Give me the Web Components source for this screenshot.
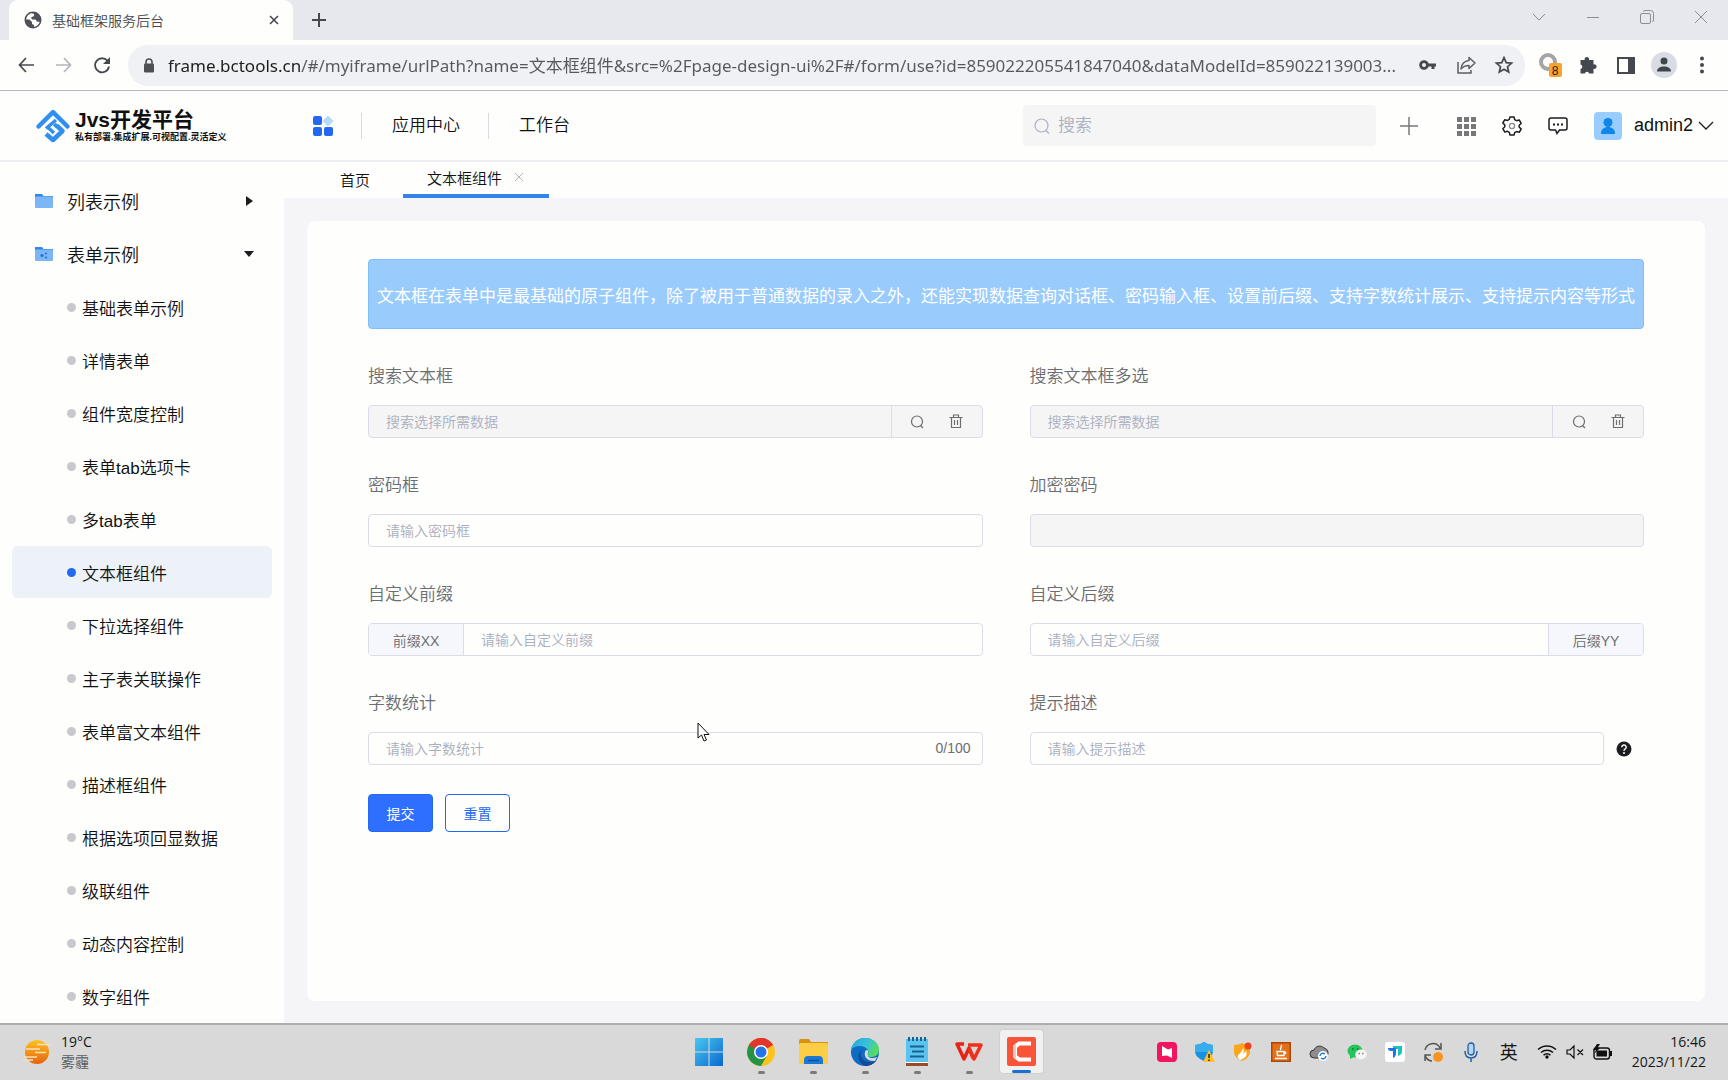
<!DOCTYPE html>
<html lang="zh-CN">
<head>
<meta charset="utf-8">
<title>基础框架服务后台</title>
<style>
    body {
        margin: 0;
        background: #fefefd;
        color: #111;
        font-family: "Liberation Sans", "Noto Sans CJK SC", sans-serif;
        font-size: 17px;
        font-weight: 350;
    }
</style>
</head>
<body>
<desktop-screen>
    <browser-chrome slot="top" page-title="基础框架服务后台"
        url="frame.bctools.cn/#/myiframe/urlPath?name=文本框组件&amp;src=%2Fpage-design-ui%2F#/form/use?id=859022205541847040&amp;dataModelId=859022139003..."></browser-chrome>
    <app-header slot="top"></app-header>
    <side-menu slot="side"></side-menu>
    <page-tabs slot="main"></page-tabs>
    <form-card slot="main">
        <span slot="notice">文本框在表单中是最基础的原子组件，除了被用于普通数据的录入之外，还能实现数据查询对话框、密码输入框、设置前后缀、支持字数统计展示、支持提示内容等形式</span>
        <form-field label="搜索文本框" hint="搜索选择所需数据" kind="search"></form-field>
        <form-field label="搜索文本框多选" hint="搜索选择所需数据" kind="search"></form-field>
        <form-field label="密码框" hint="请输入密码框" kind="password"></form-field>
        <form-field label="加密密码" kind="locked"></form-field>
        <form-field label="自定义前缀" hint="请输入自定义前缀" prefix="前缀XX"></form-field>
        <form-field label="自定义后缀" hint="请输入自定义后缀" suffix="后缀YY"></form-field>
        <form-field label="字数统计" hint="请输入字数统计" limit="100"></form-field>
        <form-field label="提示描述" hint="请输入提示描述" kind="help"></form-field>
    </form-card>
    <task-bar slot="bottom"></task-bar>
</desktop-screen>

<script>
// name: [width, height, svg content], the viewBox has the same size
const ICONS = {
    globe: [18, 18, `<circle cx="9" cy="9" r="7.700" fill="#fefefd" stroke="#4d5156" stroke-width="1.600"/><path d="M1.500 8.500h4l2.500 2.500v2l2 1v2.500L6 16.500Q1 13 1.500 8.500zM6 1.500L11 1q5 2 6 7l-1.500 3-2.500-.500-1.500-2H8L7 6.500l3-1.500V3z" fill="#4d5156"/>`],
    close: [12, 12, `<path d="M2 2l8 8M10 2l-8 8" stroke="#45484c" stroke-width="1.6"/>`],
    plusTab: [14, 14, `<path d="M7 0v14M0 7h14" stroke="#45484c" stroke-width="2"/>`],
    winMore: [14, 14, `<path d="M1 4l6 6 6-6" fill="none" stroke="#8b8d92"/>`],
    winMin: [14, 14, `<path d="M1 7.500h12" stroke="#8b8d92"/>`],
    winRestore: [14, 14, `<rect x=".5" y="3.500" width="10" height="10" rx="1.500" fill="none" stroke="#8b8d92"/><path d="M3 1.500q1-1 2-1h5.500q3 0 3 3V10q0 1-1 2" fill="none" stroke="#8b8d92"/>`],
    winClose: [14, 14, `<path d="M1 1l12 12M13 1L1 13" stroke="#8b8d92"/>`],
    back: [16, 16, `<path d="M16 8H2M8 1L1.500 8 8 15" fill="none" stroke="#45484c" stroke-width="1.700"/>`],
    forward: [16, 16, `<path d="M0 8h14M8 1l6.500 7L8 15" fill="none" stroke="#b3b5b9" stroke-width="1.700"/>`],
    reload: [18, 18, `<path d="M15 5.500A7 7 0 1 0 16 10.500" fill="none" stroke="#45484c" stroke-width="1.800"/><path d="M17 1v7h-7z" fill="#45484c"/>`],
    lock: [12, 15, `<rect x="1" y="5.500" width="10" height="9" rx="1.200" fill="#4d5156"/><path d="M3 6V4a3 3 0 0 1 6 0v2" fill="none" stroke="#4d5156" stroke-width="1.600"/>`],
    key: [18, 12, `<circle cx="5" cy="6" r="3.400" fill="none" stroke="#45484c" stroke-width="2.800"/><path d="M8 4.500h9v3h-1.500V10h-3V7.500H8z" fill="#45484c"/>`],
    share: [19, 18, `<path d="M1 6v11h13v-3" fill="none" stroke="#5b5e63" stroke-width="1.500"/><path d="M12 1.500l6 5.500-6 5.500V9.500c-4 0-6 1-8 3.500.500-5 3.500-8 8-8.500z" fill="none" stroke="#5b5e63" stroke-width="1.500" stroke-linejoin="round"/>`],
    star: [18, 18, `<path d="M9 1.600l2.200 5 5.400.500-4.100 3.600 1.200 5.400L9 13.300l-4.700 2.800 1.200-5.400-4.100-3.600 5.400-.500z" fill="none" stroke="#45484c" stroke-width="1.700"/>`],
    ext: [22, 24, `<circle cx="9" cy="9" r="7" fill="none" stroke="#a5a5a5" stroke-width="4"/><rect x="10" y="10" width="13" height="14" rx="2" fill="#f9a32b"/><text x="16" y="22" font-size="12" font-family="Liberation Sans" text-anchor="middle" fill="#222">8</text>`],
    puzzle: [18, 18, `<path d="M1.500 4h4.200a2.300 2.300 0 1 1 4.300 0h4.500v4.500a2.300 2.300 0 1 1 0 4.300V17.500h-4.300a2.300 2.300 0 0 0-4.400 0H1.500v-4.400a2.300 2.300 0 0 0 0-4.500z" fill="#45484c"/>`],
    panel: [18, 17, `<rect x="1" y="1" width="16" height="15" fill="none" stroke="#45484c" stroke-width="2"/><path d="M11 1h6v15h-6z" fill="#45484c"/>`],
    profile: [26, 26, `<circle cx="13" cy="13" r="13" fill="#d9dce3"/><circle cx="13" cy="9" r="3.500" fill="#41464d"/><path d="M6 19.500c0-3.500 3-5 7-5s7 1.500 7 5z" fill="#41464d"/>`],
    dots: [4, 18, `<circle cx="2" cy="2.500" r="2" fill="#45484c"/><circle cx="2" cy="9" r="2" fill="#45484c"/><circle cx="2" cy="15.500" r="2" fill="#45484c"/>`],
    logo: [34, 34, `<g fill="none" stroke="#318fee" stroke-linejoin="round"><path d="M2.500 17.500L17 3.200l14.500 14.300" stroke-width="4.500" stroke-linecap="round"/><path d="M10 19.500l10-8.500M11 17.500l7 6.500M18 17.500l3-2.500" stroke-width="3.500"/><path d="M10 25l7 6 9.500-9-6-5.500" stroke-width="4.500"/></g>`],
    apps: [20, 20, `<rect width="9" height="9" rx="2" fill="#2468f2"/><rect y="11" width="9" height="9" rx="2" fill="#2468f2"/><rect x="11" y="11" width="9" height="9" rx="2" fill="#2468f2"/><path d="M15 0l5 5-5 5-5-5z" fill="#b5dcff" stroke="#b5dcff" stroke-linejoin="round"/>`],
    search: [16, 16, `<circle cx="7.500" cy="7.500" r="6.500" fill="none" stroke="currentColor" stroke-width="1.200"/><path d="M12 12.500l3 3" stroke="currentColor" stroke-width="1.200"/>`],
    searchSmall: [14, 14, `<circle cx="7" cy="6.500" r="5.500" fill="none" stroke="currentColor" stroke-width="1.200"/><path d="M10.500 10.500l2.500 2.500" stroke="currentColor" stroke-width="1.200"/>`],
    plus: [18, 18, `<path d="M9 0v18M0 9h18" stroke="#77787a" stroke-width="1.500"/>`],
    grid: [20, 20, `<path d="M1 1h5v5H1zM8 1h5v5H8zM15 1h5v5h-5zM1 8h5v5H1zM8 8h5v5H8zM15 8h5v5h-5zM1 15h5v5H1zM8 15h5v5H8zM15 15h5v5h-5z" fill="#77787a"/>`],
    gear: [20, 20, `<path d="M8 1h4l.700 2.700 1.800 1 2.700-.700 2 3.300-2 1.900v1.900l2 1.900-2 3.300-2.700-.700-1.800 1L12 19H8l-.700-2.700-1.800-1-2.700.700-2-3.300 2-1.900V8.900l-2-1.900 2-3.300 2.700.700 1.800-1z" fill="none" stroke="#1d1d1f" stroke-width="1.500" stroke-linejoin="round"/><circle cx="10" cy="10" r="2.600" fill="none" stroke="#8a8a8c" stroke-width="1.300"/>`],
    chat: [20, 18, `<path d="M3 1h14q2 0 2 2v8q0 2-2 2h-5.500L9 16.500 7.500 13H3q-2 0-2-2V3q0-2 2-2z" fill="none" stroke="#1d1d1f" stroke-width="1.500"/><path d="M5 6.500h2v2H5zM9 6.500h2v2H9zM13 6.500h2v2h-2z" fill="#1d1d1f"/>`],
    avatar: [28, 28, `<rect width="28" height="28" rx="4" fill="#99cdff"/><circle cx="14" cy="10.500" r="4.500" fill="#0f86e8"/><path d="M7 22c0-5 3-7 7-7s7 2 7 7z" fill="#0f86e8"/>`],
    down: [16, 10, `<path d="M1 1l7 7 7-7" fill="none" stroke="#1d1d1f" stroke-width="1.300"/>`],
    tabClose: [10, 10, `<path d="M1 1l8 8M9 1L1 9" stroke="#b4b6ba"/>`],
    folder: [18, 16, `<path d="M0 1h7l1.500 2H18v3H0z" fill="#2f87ea"/><rect y="3.500" width="18" height="11.500" rx="1" fill="#7db6f7"/>`],
    folderShare: [18, 16, `<path d="M0 1h7l1.500 2H18v3H0z" fill="#2f87ea"/><rect y="3.500" width="18" height="11.500" rx="1" fill="#7db6f7"/><circle cx="7" cy="9.500" r="1.600" fill="#1c73dd"/><circle cx="11" cy="7.500" r="1.100" fill="#1c73dd"/><circle cx="11" cy="11.500" r="1.100" fill="#1c73dd"/>`],
    caretRight: [12, 12, `<path d="M3 1l7 5-7 5z" fill="#1d1d1f"/>`],
    caretDown: [12, 12, `<path d="M1 3h10L6 9z" fill="#1d1d1f"/>`],
    trash: [14, 15, `<path d="M.500 3.500h13M4.500 3V1h5v2M2.500 4v9.500h9V4M5.500 6v5M8.500 6v5" fill="none" stroke="currentColor" stroke-width="1.200"/>`],
    help: [16, 16, `<circle cx="8" cy="8" r="7.500" fill="#1d1d1f"/><path d="M5.800 6.300a2.200 2.200 0 1 1 3.200 1.900q-1 .600-1 1.600" fill="none" stroke="#fff" stroke-width="1.500"/><circle cx="8" cy="12" r="1" fill="#fff"/>`],
    pointer: [13, 20, `<path d="M1 1v15l3.500-3 2.500 6 2.500-1-2.500-5.500h5z" fill="#fff" stroke="#111"/>`],
    haze: [28, 26, `<defs><linearGradient id="g" x2="0" y2="1"><stop stop-color="#fdc221"/><stop offset="1" stop-color="#e8620d"/></linearGradient></defs><circle cx="14" cy="13" r="12" fill="url(#g)"/><path d="M14 5.500h14M3 10h14M12 13.500h11M1 18h13M0 21h10" stroke="#f4e2c0" stroke-width="1.500"/>`],
    windows: [28, 28, `<defs><linearGradient id="g" x2="1" y2="1"><stop stop-color="#48c8f0"/><stop offset="1" stop-color="#0a68cf"/></linearGradient></defs><path d="M0 0h13.500v13.500H0zM14.500 0H28v13.500H14.500zM0 14.500h13.500V28H0zM14.500 14.500H28V28H14.500z" fill="url(#g)"/>`],
    chrome: [28, 28, `<circle cx="14" cy="14" r="14" fill="#fcc31e"/><path d="M14 14L1.900 7a14 14 0 0 1 24.200 0z" fill="#e0362c"/><path d="M14 14L1.900 7A14 14 0 0 0 14 28l6-10.500z" fill="#249444"/><path d="M14 7h12.100a14 14 0 0 0-24.200 0L8 17.500z" fill="#e0362c"/><path d="M1.900 7L8 17.500 14 14z" fill="#249444"/><circle cx="14" cy="14" r="7" fill="#fff"/><circle cx="14" cy="14" r="5.500" fill="#2573e8"/>`],
    explorer: [29, 26, `<path d="M0 2q0-2 2-2h8l2 3h17v7H0z" fill="#d9920f"/><rect y="4" width="29" height="21" rx="1.500" fill="#fdce45"/><path d="M5 25v-4q0-4 4-4h11q4 0 4 4v4z" fill="#1b79d3"/><path d="M9 21.500h11" stroke="#0d529c" stroke-width="1.500"/>`],
    edge: [28, 28, `<defs><linearGradient id="g" x2="1" y2=".4"><stop stop-color="#26a6dd"/><stop offset=".6" stop-color="#36c3d8"/><stop offset="1" stop-color="#56db60"/></linearGradient></defs><circle cx="14" cy="14" r="14" fill="#0e6cc4"/><path d="M0 13C1 5 7 0 14 0c9 0 14 6 14 12 0 5-4 7-8 7-3 0-4-1-3-3 2-5-4-8-8-8-5 0-8 2-9 5z" fill="url(#g)"/><path d="M11 12c-4 7 2 13 9 12 3 0 5-2 6-3-3 6-8 7-12 7-7-3-9-12-3-16z" fill="#164a94"/><path d="M15 12c4 0 1 3 2 6 2 3 6 2 9 1l-2 4c-7 1-13-5-9-11z" fill="#d9d9d9"/>`],
    notepad: [22, 29, `<path d="M0 2h22v23H0z" fill="#58c4ef"/><path d="M3 0v4M7 0v4M11 0v4M15 0v4M19 0v4" stroke="#17608f" stroke-width="2"/><path d="M4 9.500h14M6 14.500h12M4 19.500h14" stroke="#17608f" stroke-width="1.800"/><path d="M0 25h22v1H0z" fill="#fff"/><path d="M0 26h22v3H0z" fill="#9b4a23"/>`],
    wps: [28, 20, `<g fill="none" stroke-width="3.500" stroke-linejoin="round"><path d="M9 2H2l7 15 5-11 4 10" stroke="#e82316"/><path d="M13 3h13l-7 14-5-11" stroke="#f0301c"/></g>`],
    camtasia: [29, 29, `<rect width="29" height="29" rx="2" fill="#fa5438"/><path d="M24 6.500H12L8 10v9l4 3.500h12" fill="none" stroke="#fff" stroke-width="4"/><path d="M6 9l3-3v17l-3-3z" fill="#f6c7ba"/>`],
    record: [20, 20, `<rect width="20" height="20" rx="4" fill="#f3155f"/><path d="M5 4l6 3.500L15 6v10l-5-2.500L5 14z" fill="#fff"/>`],
    shield: [20, 20, `<path d="M9 0q4 3 9 3v7q-1 6-9 9Q1 16 0 10V3q5 0 9-3z" fill="#1b90e2"/><path d="M9 0q4 3 9 3v7H0V3q5 0 9-3z" fill="#36aeee"/><path d="M14 8l6 12H8z" fill="#fdc22b"/><path d="M14 12v4M14 17.500v1.500" stroke="#222" stroke-width="1.500"/>`],
    flame: [20, 20, `<path d="M9 1q3 2 8 2v8q-1 5-8 8-7-3-8-8V3q5 0 8-2z" fill="#f8a71c"/><path d="M7 18c-6-5 2-6 3-12 1 2 1 4 0 6l3-3c2 5-1 7-6 9z" fill="#fff"/><circle cx="15" cy="4" r="3.500" fill="#f0421f"/>`],
    java: [20, 20, `<rect width="20" height="20" fill="#ad4708"/><rect x="1.500" y="1.500" width="17" height="17" fill="#e5701a"/><path d="M10 3c2 2-2 3 0 5M6 9.500h7v4H6.500zM13 10q3 0 1 2M4 16.500h12" fill="none" stroke="#fff" stroke-width="1.400"/>`],
    cloud: [20, 18, `<path d="M5 15a4 4 0 0 1 0-8 6 6 0 0 1 10-2 5 5 0 0 1 3 8q-1 2-3 2z" fill="#8d8d8f" stroke="#333"/><circle cx="14" cy="13" r="5" fill="#fff"/><path d="M11 13a3 3 0 0 1 5-2M17 13a3 3 0 0 1-5 2" fill="none" stroke="#1a78dc" stroke-width="1.400"/>`],
    wechat: [20, 16, `<ellipse cx="8" cy="7" rx="7.500" ry="6.500" fill="#23c45b"/><path d="M3 11v4l4-2z" fill="#23c45b"/><ellipse cx="14" cy="10.500" rx="5.800" ry="5" fill="#f4f4f4"/><path d="M5 5h1.500M10 5h1.500" stroke="#146e35" stroke-width="1.500"/><path d="M11.500 9.500h1.500M15 9.500h1.500" stroke="#888" stroke-width="1.300"/>`],
    todesk: [20, 20, `<rect width="20" height="20" rx="3" fill="#fff"/><path d="M8 4h9v5q0 4-4 5V7H8z" fill="#18c4b8"/><path d="M3 6h8v5q0 4-3 5V9H6Q3 9 3 6z" fill="#1d72ee"/>`],
    sync: [20, 20, `<path d="M2 8a8 8 0 0 1 15-2M18 1v6h-6M2 19v-6h6M2 13a8 8 0 0 0 7 6" fill="none" stroke="#555" stroke-width="1.500"/><circle cx="15" cy="15" r="5" fill="#f7941d"/>`],
    mic: [14, 20, `<rect x="4" y="1" width="6" height="12" rx="3" fill="#b8d4ef" stroke="#1d5fa5" stroke-width="1.300"/><path d="M1 9q0 7 6 7t6-7M7 16v4" fill="none" stroke="#1d5fa5" stroke-width="1.500"/>`],
    wifi: [20, 15, `<g fill="none" stroke="#111" stroke-width="1.500"><path d="M1 5.500a13 13 0 0 1 18 0M4 8.500a9 9 0 0 1 12 0M6.500 11.300a5 5 0 0 1 7 0"/></g><circle cx="10" cy="13" r="1.700" fill="#111"/>`],
    mute: [18, 14, `<path d="M1 5h3l4-4v12l-4-4H1zM11.500 4.500l5.500 5.500M17 4.500L11.500 10" fill="none" stroke="#111" stroke-width="1.200"/>`],
    battery: [20, 16, `<rect x="1" y="4" width="15.500" height="11" rx="2.500" fill="none" stroke="#111" stroke-width="1.400"/><rect x="3.500" y="6.500" width="10.500" height="6" fill="#111"/><path d="M18 7v5" stroke="#111" stroke-width="2"/><path d="M4 0L0 6h3L1 10l6-6H4.500L7 0z" fill="#111"/>`],
};

class UiIcon extends HTMLElement {
    connectedCallback() {
        const [w, h, body] = ICONS[this.getAttribute("name")];
        this.attachShadow({ mode: "open" }).innerHTML = `
            <style>
                :host { display: inline-flex; flex: none; }
                svg { display: block; overflow: visible; }
            </style>
            <svg width="${w}" height="${h}" viewBox="0 0 ${w} ${h}" aria-hidden="true">${body}</svg>
        `;
    }
}
customElements.define("ui-icon", UiIcon);

// Shared by every component below: styles that undo the default look of controls
class BaseElement extends HTMLElement {
    connectedCallback() {
        this.shadow = this.attachShadow({ mode: "open" });
        this.shadow.innerHTML = `
            <style>
                :host, * { box-sizing: border-box; }
                button, input { font: inherit; color: inherit; margin: 0; }
                button { border: 0; padding: 0; background: none; display: inline-flex; align-items: center; justify-content: center; cursor: pointer; }
                input { border: 0; outline: 0; background: none; min-width: 0; }
                a { color: inherit; text-decoration: none; }
                ${this.getStyle()}
            </style>
            ${this.getHtml()}
        `;
    }
}

class DesktopScreen extends BaseElement {
    getHtml() {
        return `
            <slot name="top"></slot>
            <div class="body">
                <slot name="side"></slot>
                <main><slot name="main"></slot></main>
            </div>
            <slot name="bottom"></slot>
            <ui-icon class="pointer" name="pointer"></ui-icon>
        `;
    }

    getStyle() {
        return `
            :host { display: flex; flex-direction: column; min-height: 100vh; position: relative; }
            .body { flex: 1; display: flex; }
            main { flex: 1; min-width: 0; display: flex; flex-direction: column; background: #f5f5f7; }
            .pointer { position: absolute; left: 697px; top: 722px; }
        `;
    }
}
customElements.define("desktop-screen", DesktopScreen);

class BrowserChrome extends BaseElement {
    getHtml() {
        const button = (name, label) =>
            `<button aria-label="${label}"><ui-icon name="${name}"></ui-icon></button>`;
        const url = this.getAttribute("url").replace(/&/g, "&amp;");
        return `
            <div class="strip">
                <div class="tab">
                    <ui-icon name="globe"></ui-icon>
                    <span>${this.getAttribute("page-title")}</span>
                    ${button("close", "关闭标签页")}
                </div>
                <div class="new">${button("plusTab", "新标签页")}</div>
                <div class="window">
                    ${button("winMore", "搜索标签页")}
                    ${button("winMin", "最小化")}
                    ${button("winRestore", "还原")}
                    ${button("winClose", "关闭")}
                </div>
            </div>
            <div class="bar">
                ${button("back", "后退")}
                ${button("forward", "前进")}
                ${button("reload", "刷新")}
                <div class="address">
                    <ui-icon name="lock"></ui-icon>
                    <input type="text" aria-label="地址" value="${url}">
                    ${button("key", "密码")}
                    ${button("share", "分享")}
                    ${button("star", "收藏")}
                </div>
                ${button("ext", "扩展")}
                ${button("puzzle", "扩展程序")}
                ${button("panel", "侧边栏")}
                ${button("profile", "用户")}
                ${button("dots", "菜单")}
            </div>
        `;
    }

    getStyle() {
        return `
            :host { display: block; }
            .strip { display: flex; height: 40px; padding-left: 9px; background: #e6e8ee; }
            .tab { display: flex; align-items: center; gap: 10px; width: 284px; padding: 0 13px 0 15px; background: #fefefd; border-radius: 9px 9px 0 0; font-size: 14px; color: #45484c; }
            .tab span { flex: 1; }
            .new { display: flex; padding-left: 19px; }
            .window { display: flex; margin-left: auto; }
            .window button { width: 54px; height: 34px; }
            .bar { display: flex; align-items: center; height: 51px; padding: 0 7px; border-bottom: 1px solid #b5b7be; }
            .bar button { width: 38px; height: 38px; flex: none; }
            .address { flex: 1; min-width: 0; display: flex; align-items: center; height: 41px; margin: 0 6px 0 7px; padding: 0 2px 0 15px; border-radius: 20px; background: #f0f1f4; }
            .address input {
                flex: 1; height: 28px; padding: 0 0 2px; margin-left: 13px;
                font: 17px "Noto Sans", "Noto Sans CJK SC", sans-serif;
                /* the host name is darker than the path */
                background: linear-gradient(90deg, #1d1d1f 134px, #55585d 134px);
                background-clip: text; -webkit-background-clip: text; color: transparent;
            }
        `;
    }
}
customElements.define("browser-chrome", BrowserChrome);

class AppHeader extends BaseElement {
    getHtml() {
        return `
            <a class="logo" href="#">
                <ui-icon name="logo"></ui-icon>
                <span><b>Jvs开发平台</b><small>私有部署.集成扩展.可视配置.灵活定义</small></span>
            </a>
            <nav>
                <button aria-label="应用"><ui-icon name="apps"></ui-icon></button>
                <a href="#">应用中心</a>
                <a href="#">工作台</a>
            </nav>
            <label class="search">
                <ui-icon name="search"></ui-icon>
                <input type="text" placeholder="搜索" aria-label="搜索">
            </label>
            <div class="tools">
                <button class="add" aria-label="新建"><ui-icon name="plus"></ui-icon></button>
                <button aria-label="全部应用"><ui-icon name="grid"></ui-icon></button>
                <button aria-label="设置"><ui-icon name="gear"></ui-icon></button>
                <button aria-label="消息"><ui-icon name="chat"></ui-icon></button>
                <button class="user"><ui-icon name="avatar"></ui-icon><span>admin2</span><ui-icon name="down"></ui-icon></button>
            </div>
        `;
    }

    getStyle() {
        return `
            :host { display: flex; align-items: center; height: 71px; border-bottom: 2px solid #ecedf4; }
            .logo { display: flex; align-items: center; gap: 5px; width: 284px; padding-left: 36px; }
            .logo span { display: flex; flex-direction: column; color: #111; }
            b { font-size: 21px; line-height: 22px; font-weight: bold; }
            small { font-size: 9px; line-height: 12px; font-weight: bold; white-space: nowrap; }
            nav { display: flex; align-items: center; padding-left: 29px; }
            nav a { margin-left: 28px; padding-left: 30px; border-left: 1px solid #d8dae0; line-height: 26px; }
            .search { display: flex; align-items: center; gap: 8px; width: 353px; height: 41px; margin-left: auto; padding: 0 11px; border-radius: 4px; background: #f5f5f6; color: #a9b0c0; }
            .search input { flex: 1; padding: 0; }
            .search input::placeholder { color: #a9b0c0; opacity: 1; }
            .tools { display: flex; align-items: center; gap: 26px; padding: 0 14px 0 24px; }
            .add { margin-right: 12px; }
            .user span { font-size: 18px; margin: 0 5px 0 12px; }
        `;
    }
}
customElements.define("app-header", AppHeader);

class SideMenu extends BaseElement {
    getHtml() {
        const items = [
            "基础表单示例", "详情表单", "组件宽度控制", "表单tab选项卡", "多tab表单",
            "文本框组件", "下拉选择组件", "主子表关联操作", "表单富文本组件", "描述框组件",
            "根据选项回显数据", "级联组件", "动态内容控制", "数字组件",
        ];
        return `
            <button><ui-icon name="folder"></ui-icon><span>列表示例</span><ui-icon name="caretRight"></ui-icon></button>
            <button><ui-icon name="folderShare"></ui-icon><span>表单示例</span><ui-icon name="caretDown"></ui-icon></button>
            ${items.map(item => `<a href="#" ${item === "文本框组件" ? `class="active"` : ""}>${item}</a>`).join("")}
        `;
    }

    getStyle() {
        return `
            :host { display: flex; flex-direction: column; gap: 1px; width: 284px; flex: none; padding: 13px 12px 0; }
            button, a { display: flex; align-items: center; height: 52px; border-radius: 6px; }
            button { padding: 0 17px 0 23px; font-size: 18px; }
            button span { flex: 1; padding-left: 14px; text-align: left; }
            a { gap: 6px; width: 260px; padding-left: 55px; }
            a::before { content: ""; width: 9px; height: 9px; border-radius: 50%; background: #c8c9cc; }
            .active { background: #edf1f8; }
            .active::before { background: #2468f2; }
        `;
    }
}
customElements.define("side-menu", SideMenu);

class PageTabs extends BaseElement {
    getHtml() {
        return `
            <a href="#">首页</a>
            <a href="#" class="active">文本框组件<ui-icon name="tabClose"></ui-icon></a>
        `;
    }

    getStyle() {
        return `
            :host { display: flex; height: 36px; padding-left: 32px; background: #fefefd; font-size: 15px; }
            a { display: flex; align-items: center; gap: 12px; padding: 0 25px 2px 24px; }
            a:first-child { padding-right: 31px; }
            .active { border-bottom: 4px solid #3384ea; }
            a + a { margin-left: 8px; }
        `;
    }
}
customElements.define("page-tabs", PageTabs);

class FormCard extends BaseElement {
    getHtml() {
        return `
            <div class="notice"><slot name="notice"></slot></div>
            <div class="fields"><slot></slot></div>
            <div class="actions">
                <button class="primary">提交</button>
                <button>重置</button>
            </div>
        `;
    }

    getStyle() {
        return `
            :host { display: block; flex: 1; margin: 23px 23px 22px; padding: 38px 61px; border-radius: 8px; background: #fefefd; }
            .notice { display: flex; align-items: center; justify-content: center; height: 70px; border: 1px solid #80bdfb; border-radius: 4px; background: #99cbfd; color: #fff; font-weight: 400; white-space: nowrap; }
            .fields { display: grid; grid-template-columns: 1fr 1fr; gap: 36px 47px; padding: 36px 0 29px; }
            .actions { display: flex; gap: 12px; }
            .actions button { width: 65px; height: 38px; border: 1px solid #2468f2; border-radius: 4px; color: #2468f2; font-size: 14px; font-weight: 400; }
            .actions .primary { background: #2f6fff; color: #fff; }
        `;
    }
}
customElements.define("form-card", FormCard);

class FormField extends BaseElement {
    getHtml() {
        const kind = this.getAttribute("kind");
        const prefix = this.getAttribute("prefix");
        const suffix = this.getAttribute("suffix");
        const limit = this.getAttribute("limit");
        return `
            <label for="field">${this.getAttribute("label")}</label>
            <div class="row">
                <div class="box ${kind || ""}">
                    ${prefix ? `<span class="addon before">${prefix}</span>` : ""}
                    <input id="field"
                        type="${kind === "password" ? "password" : "text"}"
                        placeholder="${this.getAttribute("hint") || ""}"
                        ${kind === "locked" ? "disabled" : ""}
                        ${kind === "search" ? "readonly" : ""}
                        ${limit ? `maxlength="${limit}"` : ""}>
                    ${limit ? `<span class="count">0/${limit}</span>` : ""}
                    ${suffix ? `<span class="addon after">${suffix}</span>` : ""}
                    ${kind === "search" ? `
                        <span class="icons">
                            <button aria-label="搜索"><ui-icon name="searchSmall"></ui-icon></button>
                            <button aria-label="清空"><ui-icon name="trash"></ui-icon></button>
                        </span>` : ""}
                </div>
                ${kind === "help" ? `<ui-icon name="help"></ui-icon>` : ""}
            </div>
        `;
    }

    getStyle() {
        return `
            :host { display: block; min-width: 0; color: #6b6d71; }
            label { display: block; line-height: 24px; margin-bottom: 16px; }
            .row { display: flex; align-items: center; gap: 12px; }
            .row > ui-icon { margin-right: 12px; }
            .box { flex: 1; display: flex; height: 33px; border: 1px solid #dadde8; border-radius: 4px; font-size: 14px; overflow: hidden; }
            .search, .locked { background: #f5f5f6; }
            input { flex: 1; padding: 0 17px; }
            input::placeholder { color: #a9afbf; opacity: 1; }
            .addon { width: 95px; display: flex; align-items: center; justify-content: center; background: #f5f7fc; }
            .before { border-right: 1px solid #dadde8; }
            .after { border-left: 1px solid #dadde8; }
            .count { padding-right: 11px; line-height: 31px; }
            .icons { display: flex; width: 91px; padding: 0 6px; border-left: 1px solid #dadde8; }
            .icons button { flex: 1; }
        `;
    }
}
customElements.define("form-field", FormField);

class TaskBar extends BaseElement {
    getHtml() {
        const apps = ["windows", "chrome", "explorer", "edge", "notepad", "wps", "camtasia"];
        const tray = ["record", "shield", "flame", "java", "cloud", "wechat", "todesk", "sync", "mic"];
        return `
            <div class="weather">
                <ui-icon name="haze"></ui-icon>
                <span>19°C<br><i>雾霾</i></span>
            </div>
            <div class="apps">
                ${apps.map(app => `<button class="${app}" aria-label="${app}"><ui-icon name="${app}"></ui-icon></button>`).join("")}
            </div>
            <div class="tray">
                ${tray.map(name => `<span><ui-icon name="${name}"></ui-icon></span>`).join("")}
                <span class="ime">英</span>
                <div class="system">
                    <ui-icon name="wifi"></ui-icon>
                    <ui-icon name="mute"></ui-icon>
                    <ui-icon name="battery"></ui-icon>
                </div>
                <div class="clock">16:46<br>2023/11/22</div>
            </div>
        `;
    }

    getStyle() {
        return `
            :host { display: grid; grid-template-columns: 1fr auto 1fr; height: 57px; padding-bottom: 2px; border-top: 2px solid #adadad; background: #d9d9d9; font: 14px/20px "Open Sans", "Noto Sans CJK SC", sans-serif; color: #161616; }
            .weather { display: flex; align-items: center; gap: 10px; padding-left: 23px; }
            i { font-style: normal; color: #5d5d5d; }
            .apps { display: flex; align-items: center; gap: 7px; padding-left: 2px; }
            .apps button { position: relative; width: 45px; height: 45px; border-radius: 4px; }
            .apps button::after { content: ""; position: absolute; left: 19px; bottom: 0; width: 7px; height: 3px; border-radius: 2px; background: #7b7b7b; }
            .apps .windows::after { display: none; }
            .apps .camtasia { background: #f1f1f1; border: 1px solid #cfcfcf; }
            .apps .camtasia::after { left: 12px; width: 19px; background: #1b6fd0; }
            .tray { display: flex; align-items: center; justify-content: flex-end; padding-right: 22px; }
            .tray > span { width: 38px; display: flex; justify-content: center; }
            .tray .ime { font-size: 18px; }
            .system { display: flex; align-items: center; gap: 9px; padding: 0 19px 0 9px; }
            .clock { text-align: right; }
        `;
    }
}
customElements.define("task-bar", TaskBar);
</script>
</body>
</html>
